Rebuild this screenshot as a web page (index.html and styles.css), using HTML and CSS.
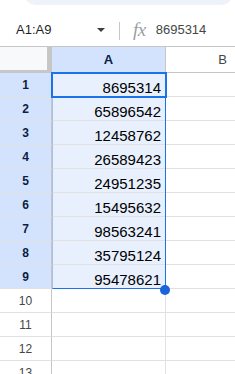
FILE: index.html
```html
<!DOCTYPE html>
<html lang="en">
<head>
    <meta charset="UTF-8">
    <title>Sheet</title>
    <link rel="stylesheet" href="styles.css">
</head>
<body>
    <!-- toolbar edge -->
    <div class="toolbar-edge"></div>

    <!-- name box + formula -->
    <div class="formula-bar">
        <div class="name-box">A1:A9</div>
        <span class="caret"></span>
        <span class="divider"></span>
        <span class="fx">fx</span>
        <div class="formula-value">8695314</div>
    </div>

    <!-- grid -->
    <div class="grid">
        <div class="corner"></div>
        <div class="col-head sel">A</div>
        <div class="col-head">B</div>

        <div class="row-head sel">1</div><div class="cell sel">8695314</div><div class="cell"></div>
        <div class="row-head sel">2</div><div class="cell sel">65896542</div><div class="cell"></div>
        <div class="row-head sel">3</div><div class="cell sel">12458762</div><div class="cell"></div>
        <div class="row-head sel">4</div><div class="cell sel">26589423</div><div class="cell"></div>
        <div class="row-head sel">5</div><div class="cell sel">24951235</div><div class="cell"></div>
        <div class="row-head sel">6</div><div class="cell sel">15495632</div><div class="cell"></div>
        <div class="row-head sel">7</div><div class="cell sel">98563241</div><div class="cell"></div>
        <div class="row-head sel">8</div><div class="cell sel">35795124</div><div class="cell"></div>
        <div class="row-head sel">9</div><div class="cell sel">95478621</div><div class="cell"></div>
        <div class="row-head">10</div><div class="cell"></div><div class="cell"></div>
        <div class="row-head">11</div><div class="cell"></div><div class="cell"></div>
        <div class="row-head">12</div><div class="cell"></div><div class="cell"></div>
        <div class="row-head">13</div><div class="cell"></div><div class="cell"></div>

        <!-- selection overlay -->
        <div class="range"></div>
        <div class="active"></div>
        <div class="handle"></div>
    </div>
</body>
</html>
```

FILE: styles.css
```css
* {
    box-sizing: border-box;
}

body {
    margin: 0;
    width: 235px;
    height: 374px;
    overflow: hidden;
    background: #fff;
    font-family: "Liberation Sans", Arial, sans-serif;
    color: #1f1f1f;
}

/* bottom of the rounded toolbar above */
.toolbar-edge {
    height: 20px;
    margin: -15px 3px 0 25px;
    background-color: #eef2f9;
    border-radius: 18px;
}

/* formula bar */
.formula-bar {
    height: 42px;
    padding-top: 8px;
    display: flex;
    align-items: center;
    border-bottom: 1px solid #c4c7c5;
}

.name-box {
    font-size: 13px;
    margin-left: 16px;
    width: 81px;
}

.caret {
    width: 0;
    height: 0;
    border-left: 4px solid transparent;
    border-right: 4px solid transparent;
    border-top: 4px solid #3c3f41;
}

.divider {
    width: 1px;
    height: 18px;
    background-color: #c4c7c5;
    margin-left: 14px;
    margin-top: 3px;
}

.fx {
    font-family: "Liberation Serif", "Times New Roman", serif;
    font-style: italic;
    font-size: 19px;
    color: #9aa0a6;
    margin-left: 13px;
    letter-spacing: -0.5px;
}

.formula-value {
    font-size: 13px;
    color: #444746;
    margin-left: 10px;
}

/* grid */
.grid {
    position: relative;
    display: grid;
    grid-template-columns: 52px 114px 114px;
    grid-template-rows: 26px;
    grid-auto-rows: 24px;
}

.corner {
    background-color: #f8f9fa;
    border-right: 5px solid #c7c7c7;
    border-bottom: 3px solid #c7c7c7;
}

.col-head {
    display: flex;
    align-items: center;
    justify-content: center;
    font-size: 13px;
    color: #444746;
    border-right: 1px solid #c4c7c5;
    border-bottom: 1px solid #c4c7c5;
}

.col-head.sel {
    background-color: #d3e3fd;
    color: #0b1f44;
    font-weight: bold;
}

.row-head {
    display: flex;
    align-items: center;
    justify-content: center;
    padding-top: 1px;
    font-size: 12px;
    color: #444746;
    border-right: 1px solid #c4c7c5;
    border-bottom: 1px solid #e1e1e1;
}

.row-head.sel {
    background-color: #d3e3fd;
    color: #0b1f44;
    font-weight: bold;
}

.cell {
    display: flex;
    align-items: flex-end;
    justify-content: flex-end;
    padding: 0 4px 1px 0;
    font-size: 15px;
    line-height: 1;
    color: #000;
    border-right: 1px solid #e1e1e1;
    border-bottom: 1px solid #e1e1e1;
}

.cell.sel {
    background-color: #e8f0fe;
}

/* selection */
.range {
    position: absolute;
    left: 52px;
    top: 26px;
    width: 114px;
    height: 216px;
    border: 1px solid #1a73e8;
    border-left-color: #a8c0e8;
}

.active {
    position: absolute;
    left: 51px;
    top: 25px;
    width: 116px;
    height: 26px;
    border: 2px solid #1a73e8;
}

.handle {
    position: absolute;
    left: 160px;
    top: 238px;
    width: 10px;
    height: 10px;
    border-radius: 50%;
    background-color: #1a63d9;
}
```
